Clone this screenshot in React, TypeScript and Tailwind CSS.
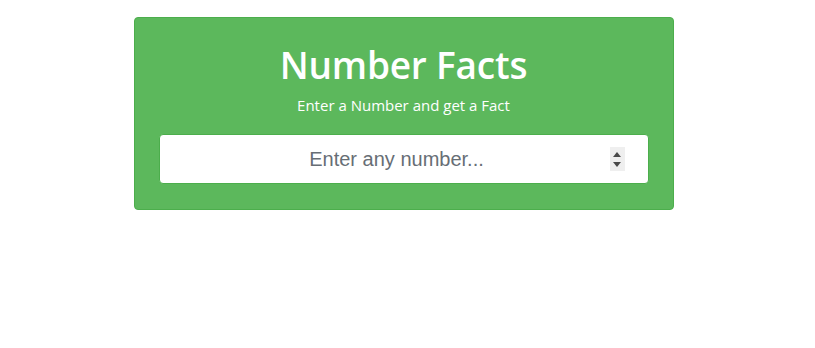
import React from 'react'

const NumberFacts = () => {
  return (
    <div className="min-h-[348px] bg-white pt-[17px]">
      <div className="mx-auto w-[540px] -translate-x-[4px] rounded-[4px] border border-[#4cae4c] bg-[#5cb85c] px-[24px] pt-[22px] pb-[25px] text-white">
        <h1 className="text-center font-['Open_Sans',sans-serif] text-[37px] leading-[50px] font-semibold tracking-[-0.2px]">
          Number Facts
        </h1>
        <p className="mt-[5px] text-center font-['Open_Sans',sans-serif] text-[15px] leading-[20px]">
          Enter a Number and get a Fact
        </p>
        <div className="relative mt-[19px]">
          <input
            type="text"
            placeholder="Enter any number..."
            className="h-[50px] w-full rounded-[4px] border border-[#4cae4c] bg-white pr-[30px] pl-4 text-center font-['Liberation_Sans',Arial,sans-serif] text-[20px] text-[#555] outline-none placeholder:text-[#676e75]"
          />
          <div className="absolute top-[13px] right-[24px] flex h-[24px] w-[15px] flex-col items-center justify-center gap-[5px] bg-[#efefef]">
            <svg width="8" height="5" viewBox="0 0 8 5">
              <path d="M4 0 L8 5 L0 5 Z" fill="#4a4a4a" />
            </svg>
            <svg width="8" height="5" viewBox="0 0 8 5">
              <path d="M0 0 L8 0 L4 5 Z" fill="#4a4a4a" />
            </svg>
          </div>
        </div>
      </div>
    </div>
  )
}

export default function App() {
  return <NumberFacts />
}
